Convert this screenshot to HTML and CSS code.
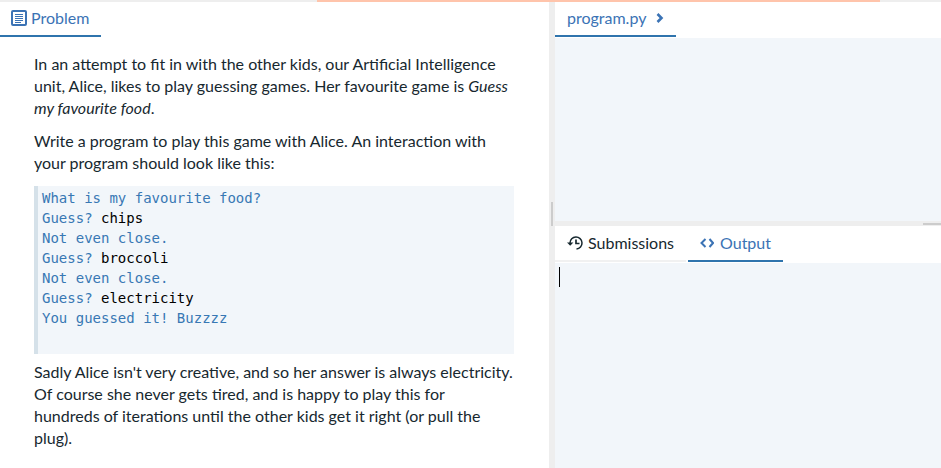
FILE: index.html
```html
<!DOCTYPE html>
<html lang="en">
<head>
<meta charset="UTF-8">
<meta name="viewport" content="width=device-width, initial-scale=1.0">
<title>Guess my favourite food</title>
<link rel="stylesheet" href="styles.css">
</head>
<body>

<div class="topbar"><div class="notice"></div></div>

<div class="workspace">
    <section class="problem">
        <nav class="tabs">
            <button class="tab active" type="button">
                <svg class="icon icon-problem" viewBox="0 0 16 16" width="16" height="16" fill="none" stroke="currentColor">
                    <rect x="1" y="1" width="14" height="14" rx="1" stroke-width="2"/>
                    <path d="M4 4.5h8M4 6.5h8M4 8.5h8M4 10.5h8M4 12.5h6" stroke-width="1"/>
                </svg>
                Problem
            </button>
        </nav>
        <div class="content">
            <p>In an attempt to fit in with the other kids, our Artificial Intelligence unit, Alice, likes to play guessing games. Her favourite game is <em>Guess my favourite food</em>.</p>
            <p>Write a program to play this game with Alice. An interaction with your program should look like this:</p>
<pre class="example">What is my favourite food?
Guess? <kbd>chips</kbd>
Not even close.
Guess? <kbd>broccoli</kbd>
Not even close.
Guess? <kbd>electricity</kbd>
You guessed it! Buzzzz
</pre>
            <p>Sadly Alice isn't very creative, and so her answer is always electricity. Of course she never gets tired, and is happy to play this for hundreds of iterations until the other kids get it right (or pull the plug).</p>
        </div>
    </section>

    <div class="gutter gutter-vertical"><span class="handle"></span></div>

    <section class="code">
        <nav class="tabs tabs-file">
            <button class="tab active" type="button">
                program.py
                <svg class="icon icon-chevron" viewBox="0 0 8 10" width="8" height="10" fill="none" stroke="currentColor">
                    <path d="M1.5 1L5.5 5L1.5 9" stroke-width="2.6"/>
                </svg>
            </button>
        </nav>
        <textarea class="editor" aria-label="program.py" spellcheck="false"></textarea>

        <div class="gutter gutter-horizontal"><span class="handle"></span></div>

        <nav class="tabs tabs-result">
            <button class="tab" type="button">
                <svg class="icon icon-history" viewBox="0 0 16 14" width="16" height="14" fill="none" stroke="currentColor">
                    <path d="M3 7A6 6 0 1 1 9.5 13" stroke-width="1.5"/>
                    <path d="M0 6.5h6.4L3.2 9.8z" fill="currentColor" stroke="none"/>
                    <path d="M9 3.5v4h3.5" stroke-width="1.7"/>
                </svg>
                Submissions
            </button>
            <button class="tab active" type="button">
                <svg class="icon icon-output" viewBox="0 0 14 10" width="14" height="10" fill="none" stroke="currentColor">
                    <path d="M5.5 1L1.5 5L5.5 9M9.5 1L13 5L9.5 9" stroke-width="2"/>
                </svg>
                Output
            </button>
        </nav>
        <div class="output"><span class="cursor"></span></div>
    </section>
</div>

</body>
</html>
```
FILE: styles.css
```css
* {
    box-sizing: border-box;
}

body {
    display: flex;
    flex-direction: column;
    height: 100vh;
    margin: 0;
    overflow: hidden;
    background-color: #fff;
    color: #17282f;
    font-family: Lato, sans-serif;
    font-size: 16px;
    line-height: 22px;
}

.topbar {
    flex: none;
    height: 2px;
    padding: 0 61px 0 317px;
    background-color: #eee;
}

.notice {
    height: 2px;
    background-color: #ffc4ab;
}

.workspace {
    flex: 1;
    display: flex;
    min-height: 0;
}

.problem {
    flex: 549 1 0;
    min-width: 0;
    overflow: hidden;
}

.code {
    flex: 386 1 0;
    display: flex;
    flex-direction: column;
    min-width: 0;
}

.tabs {
    flex: none;
    display: flex;
}

.tabs-file {
    padding-bottom: 1px;
}

.tabs-result {
    gap: 2px;
    padding-bottom: 1px;
}

.tab {
    display: flex;
    align-items: center;
    gap: 5px;
    height: 35px;
    padding: 0 12px 2px;
    border: none;
    border-bottom: 2px solid transparent;
    background: none;
    color: inherit;
    font: inherit;
    cursor: pointer;
}

.problem .tab {
    gap: 4px;
    padding-left: 11px;
}

.tab.active {
    border-bottom-color: #2f74ad;
    color: #3b73b5;
}

.tabs-file .tab {
    gap: 10px;
}

.tabs-result .tab {
    height: 36px;
    padding: 0 12px;
}

.tabs-result .tab:first-child {
    border-bottom-color: #f1f1f1;
}

.tabs-result .active {
    gap: 6px;
}

.icon {
    flex: none;
}

.content {
    padding: 16px 35px 0 34px;
}

.content p {
    margin: 0 0 11px;
}

.example {
    margin: 12px 0 7px;
    padding: 2px 4px 26px;
    border-left: 4px solid #d5e1e9;
    background-color: #f2f6fa;
    color: #3878b4;
    font-family: "DejaVu Sans Mono", monospace;
    font-size: 14px;
    line-height: 20px;
}

.example kbd {
    color: #000;
    font: inherit;
}

.gutter {
    flex: none;
    position: relative;
    background-color: #eee;
}

.gutter-vertical {
    width: 6px;
}

.gutter-horizontal {
    height: 5px;
}

.handle {
    position: absolute;
    background-color: #ccc;
}

.gutter-vertical .handle {
    top: 43%;
    left: 2px;
    width: 2px;
    height: 24px;
}

.gutter-horizontal .handle {
    top: 2px;
    right: 0;
    width: 18px;
    height: 2px;
}

.editor,
.output {
    min-height: 0;
    margin: 0;
    border: none;
    background-color: #f2f6fa;
}

.editor {
    flex: 183 1 0;
    padding: 4px;
    outline: none;
    resize: none;
    font-family: "DejaVu Sans Mono", monospace;
    font-size: 14px;
}

.output {
    flex: 205 1 0;
    padding: 4px;
}

.cursor {
    display: block;
    width: 1px;
    height: 20px;
    background-color: #000;
}
```
